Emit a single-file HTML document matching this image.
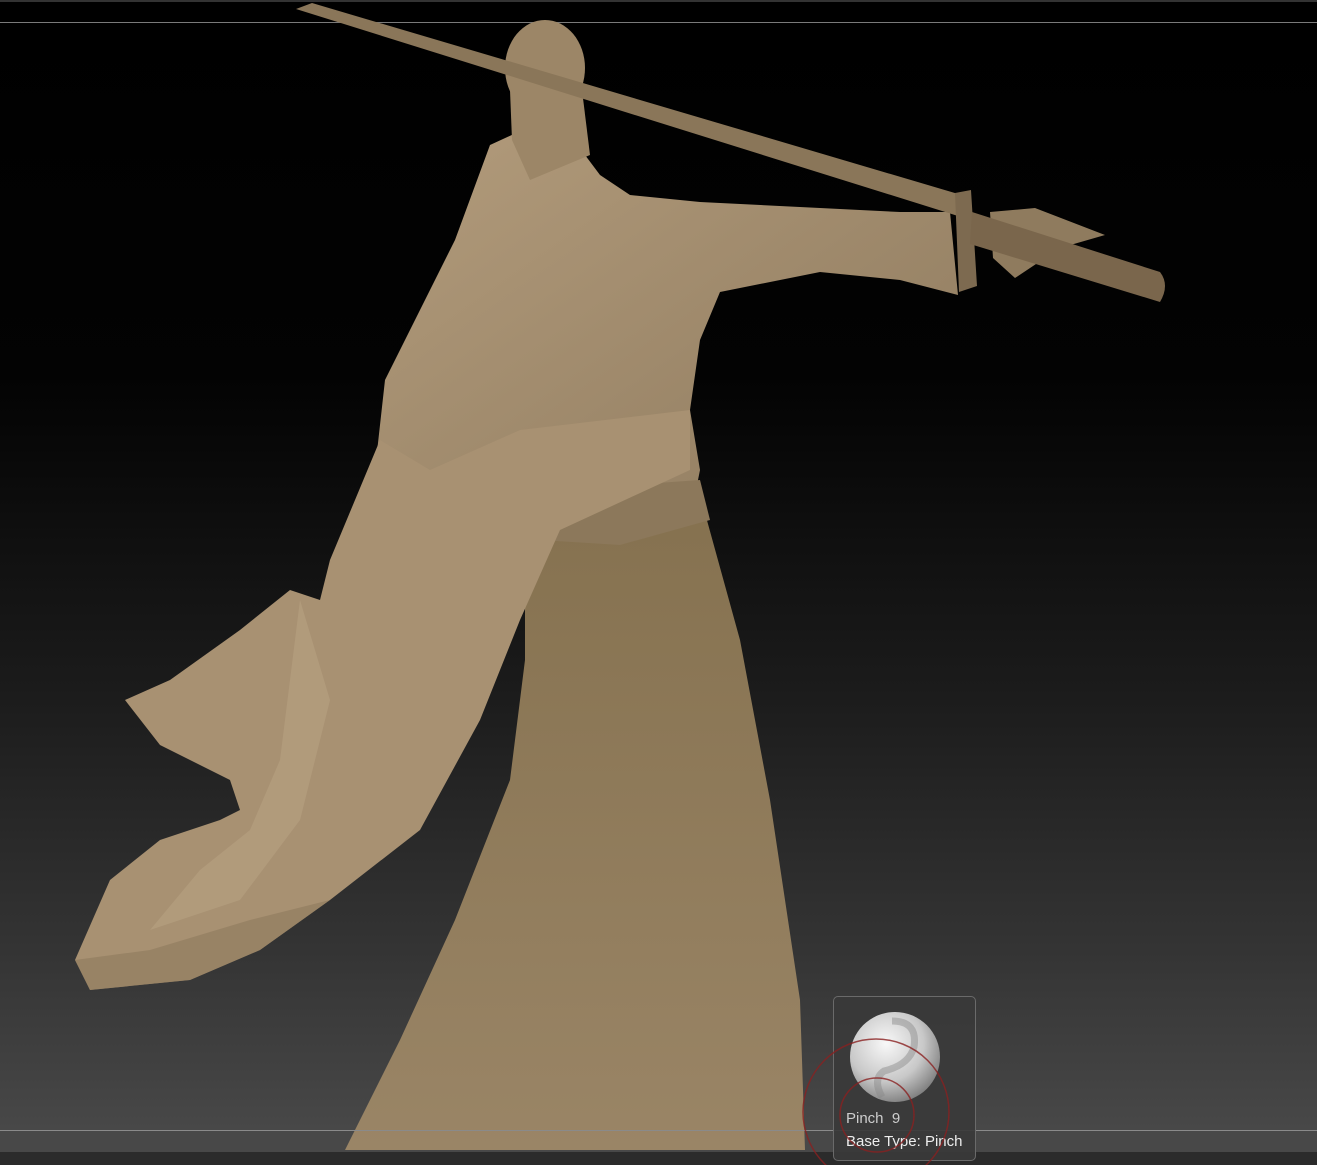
<!DOCTYPE html>
<html><head><meta charset="utf-8"><style>
html,body{margin:0;padding:0;width:1317px;height:1165px;overflow:hidden;background:#000}
#bg{position:absolute;left:0;top:0;width:1317px;height:1152px;background:linear-gradient(#000 0px,#030303 380px,#1c1c1c 700px,#343434 950px,#484848 1130px)}
#top{position:absolute;left:0;top:0;width:1317px;height:2px;background:#333}
#l1{position:absolute;left:0;top:22px;width:1317px;height:1px;background:#7a7a7a}
#l2{position:absolute;left:0;top:1130px;width:1317px;height:1px;background:#8a8a8a}
#bar{position:absolute;left:0;top:1152px;width:1317px;height:13px;background:#2b2b2b}
#tip{position:absolute;left:833px;top:996px;width:141px;height:163px;border:1px solid #6a6a6a;border-radius:5px;background:rgba(58,58,58,0.92);font-family:"Liberation Sans",sans-serif;color:#ddd}
#tip .a{position:absolute;left:12px;top:113px;font-size:15px;color:#ccc}
#tip .b{position:absolute;left:12px;top:136px;font-size:15px;color:#eee}
svg{position:absolute;left:0;top:0}
</style></head><body>
<div id="bg"></div><div id="top"></div><div id="l1"></div>
<svg width="1317" height="1165">
<defs>
<linearGradient id="t" x1="0" y1="0" x2="1" y2="1"><stop offset="0" stop-color="#b39c7c"/><stop offset="1" stop-color="#8e7a5e"/></linearGradient>
<linearGradient id="p" x1="0" y1="0" x2="0" y2="1"><stop offset="0" stop-color="#85714f"/><stop offset="1" stop-color="#9a8566"/></linearGradient>
<radialGradient id="s" cx="0.4" cy="0.35" r="0.7"><stop offset="0" stop-color="#f8f8f8"/><stop offset="0.6" stop-color="#c8c8c8"/><stop offset="1" stop-color="#7a7a7a"/></radialGradient>
</defs>
<!-- pants -->
<path d="M525 545 L600 510 L700 495 L740 640 L770 800 L800 1000 L805 1150 L345 1150 L400 1040 L455 920 L510 780 L525 660 Z" fill="url(#p)"/>
<!-- torso -->
<path d="M490 145 L555 115 L600 175 L630 195 L700 202 L820 208 L900 212 L950 212 L958 295 L900 280 L820 272 L720 292 L700 340 L690 410 L700 470 L690 520 L620 525 L560 520 L480 510 L420 500 L375 470 L385 380 L420 310 L455 240 Z" fill="url(#t)"/>
<!-- belt -->
<path d="M560 490 L700 480 L710 520 L620 545 L540 540 Z" fill="#8c785b"/>
<!-- drape -->
<path d="M380 440 L430 470 L520 430 L690 410 L690 470 L560 530 L520 620 L480 720 L420 830 L330 900 L260 950 L190 980 L90 990 L75 960 L110 880 L160 840 L220 820 L240 810 L230 780 L160 745 L125 700 L170 680 L240 630 L290 590 L320 600 L330 560 L355 500 Z" fill="#a89172"/>
<path d="M300 600 L330 700 L300 820 L240 900 L150 930 L200 870 L250 830 L280 760 Z" fill="#b8a282" opacity="0.6"/>
<path d="M330 900 L260 950 L190 980 L90 990 L75 960 L150 950 L250 920 Z" fill="#8e7a5d" opacity="0.6"/>
<!-- head -->
<ellipse cx="545" cy="68" rx="40" ry="48" fill="#9c8667"/>
<path d="M510 90 L582 90 L590 155 L530 180 L512 140 Z" fill="#9c8667"/>
<!-- hand -->
<path d="M990 212 L1035 208 L1105 235 L1060 248 L1015 278 L993 258 Z" fill="#8f7b5e"/>
<!-- sword -->
<path d="M296 9 L312 3 L965 196 L958 216 Z" fill="#8a7659"/>
<path d="M955 193 L971 190 L977 286 L959 292 Z" fill="#7d6a50"/>
<path d="M972 212 L1160 272 Q1170 285 1160 302 L970 244 Z" fill="#7a664c"/>
</svg>
<div id="l2"></div><div id="bar"></div>
<div id="tip">
<svg width="141" height="163" style="position:absolute;left:0;top:0">
<circle cx="61" cy="60" r="45" fill="url(#s)"/>
<path d="M58 24 Q84 24 80 50 Q75 68 50 74 Q38 82 48 100" fill="none" stroke="#888" stroke-width="7" opacity="0.45"/>
</svg>
<div class="a">Pinch&nbsp;&nbsp;9</div><div class="b">Base Type: Pinch</div></div>
<svg width="1317" height="1165" style="pointer-events:none">
<circle cx="876" cy="1112" r="73" fill="none" stroke="#8a2020" stroke-width="1.5" opacity="0.8"/>
<circle cx="877" cy="1115" r="37" fill="none" stroke="#8a2020" stroke-width="1.5" opacity="0.8"/>
</svg>
</body></html>
